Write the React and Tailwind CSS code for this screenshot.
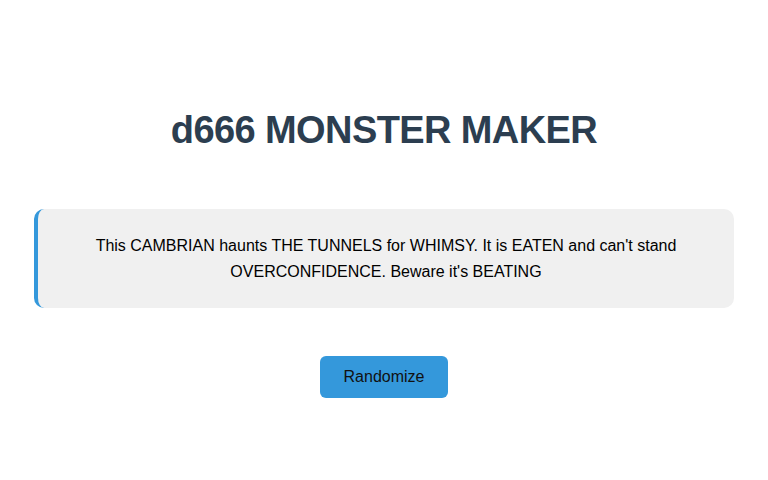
export default function App() {
  const description =
    "This CAMBRIAN haunts THE TUNNELS for WHIMSY. It is EATEN and can't stand OVERCONFIDENCE. Beware it's BEATING";

  return (
    <div className="min-h-[480px] bg-white font-['Liberation_Sans',Arial,sans-serif]">
      <div className="mx-auto flex w-[700px] flex-col items-center pt-[108px]">
        <h1 className="text-[38px] font-bold leading-[44px] tracking-[-0.6px] text-[#2c3e50]">
          d666 MONSTER MAKER
        </h1>
        <div className="mt-[57px] w-full rounded-[10px] border-l-4 border-[#3498db] bg-[#f0f0f0] px-6 pt-[24px] pb-[23px] text-center text-base leading-[26px] text-black">
          {description}
        </div>
        <button
          type="button"
          className="mt-[48px] rounded-md bg-[#3498db] px-6 py-[9px] text-base leading-6 text-[#111]"
        >
          Randomize
        </button>
      </div>
    </div>
  );
}
